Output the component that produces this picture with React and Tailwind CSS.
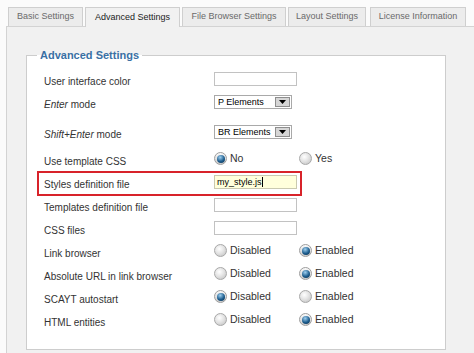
const tabs = [
  { label: "Basic Settings", cls: "w-[75px]" },
  { label: "Advanced Settings", cls: "w-[95px] ml-[2px]", active: true },
  { label: "File Browser Settings", cls: "w-[104px] ml-[2px]" },
  { label: "Layout Settings", cls: "w-[78px] ml-[2px]" },
  { label: "License Information", cls: "w-[96px] ml-[4px]" },
];

const Radio = ({ checked }) =>
  checked ? (
    <span className="w-[13px] h-[13px] rounded-full border border-[#9d9d9d] bg-[linear-gradient(#fafafa,#cdcdcd)] flex items-center justify-center shrink-0">
      <span className="w-[8px] h-[8px] rounded-full bg-[radial-gradient(circle_at_40%_30%,#9fd0f0,#1d5d8e_55%,#0b2b47)]" />
    </span>
  ) : (
    <span className="w-[13px] h-[13px] rounded-full border border-[#a8a8a8] bg-[radial-gradient(circle_at_40%_35%,#ffffff,#e4e4e4_45%,#bdbdbd)] shrink-0" />
  );

const RadioPair = ({ a, b, first }) => (
  <div className="flex items-center text-[10.5px] text-[#333] leading-[13px]">
    <div className="w-[85px] flex items-center gap-[3px]">
      <Radio checked={first} />
      <span>{a}</span>
    </div>
    <div className="flex items-center gap-[3px]">
      <Radio checked={!first} />
      <span>{b}</span>
    </div>
  </div>
);

const TextInput = ({ value, highlight }) => (
  <div
    className={
      "w-[83px] h-[14px] border flex items-center pl-[2px] text-[9px] leading-none text-black " +
      (highlight ? "border-[#c9c9b0] bg-[#ffffdc]" : "border-[#c2c2c2] bg-white")
    }
  >
    {value}
    {highlight && <span className="w-px h-[10px] bg-black" />}
  </div>
);

const Select = ({ value }) => (
  <div className="w-[78px] h-[14px] border border-[#a9a9a9] bg-white flex items-center">
    <span className="flex-1 pl-[3px] text-[9px] leading-none text-black">{value}</span>
    <span className="w-[15px] h-[10px] mr-[1px] border border-[#8e8e8e] bg-[#d6d6d6] flex items-center justify-center">
      <svg width="7" height="4" viewBox="0 0 7 4">
        <polygon points="0,0 7,0 3.5,4" fill="#000" />
      </svg>
    </span>
  </div>
);

const Row = ({ label, h = "h-[23px]", children, marked }) => (
  <div className={"relative flex items-start " + h}>
    {marked && (
      <div className="absolute -left-[7px] -top-[1px] w-[265px] h-[25px] border-2 border-[#d8232a]" />
    )}
    <div className="w-[170px] mt-[7px] text-[10px] leading-[12px] text-[#333]">{label}</div>
    <div className="mt-[3px]">{children}</div>
  </div>
);

export default function App() {
  return (
    <div className="w-[474px] h-[353px] overflow-hidden bg-[#fbfbfb] pt-[7px] font-['Liberation_Sans',Arial,sans-serif]">
      <div className="flex items-start h-[19px] ml-[8px] relative z-10">
        {tabs.map((t) => (
          <div
            key={t.label}
            className={
              "flex items-center justify-center border-t border-l border-r border-[#cfcfcf] text-[9px] " +
              t.cls +
              (t.active
                ? " h-[20px] bg-[#f1f1f1] text-[#222]"
                : " h-[19px] bg-[#ececec] text-[#6a6a6a]")
            }
          >
            {t.label}
          </div>
        ))}
      </div>
      <div className="ml-[6px] h-[327px] border-l border-t border-[#d3d3d3] bg-[#f1f1f1] pt-[21px] pl-[19px]">
        <fieldset className="w-[420px] border border-[#cdcdcd] bg-white pt-[7px] pb-[16px] pl-[17px]">
          <legend className="-ml-[7px] px-[3px] text-[11px] leading-[14px] font-bold text-[#3a70a4]">
            Advanced Settings
          </legend>
          <Row label="User interface color">
            <TextInput />
          </Row>
          <Row label={<><i>Enter</i> mode</>} h="h-[30px]">
            <Select value="P Elements" />
          </Row>
          <Row label={<><i>Shift+Enter</i> mode</>} h="h-[27px]">
            <Select value="BR Elements" />
          </Row>
          <Row label="Use template CSS">
            <RadioPair a="No" b="Yes" first />
          </Row>
          <Row label="Styles definition file" marked>
            <TextInput value="my_style.js" highlight />
          </Row>
          <Row label="Templates definition file">
            <TextInput />
          </Row>
          <Row label="CSS files">
            <TextInput />
          </Row>
          <Row label="Link browser">
            <RadioPair a="Disabled" b="Enabled" />
          </Row>
          <Row label="Absolute URL in link browser">
            <RadioPair a="Disabled" b="Enabled" />
          </Row>
          <Row label="SCAYT autostart">
            <RadioPair a="Disabled" b="Enabled" first />
          </Row>
          <Row label="HTML entities">
            <RadioPair a="Disabled" b="Enabled" />
          </Row>
        </fieldset>
      </div>
    </div>
  );
}
